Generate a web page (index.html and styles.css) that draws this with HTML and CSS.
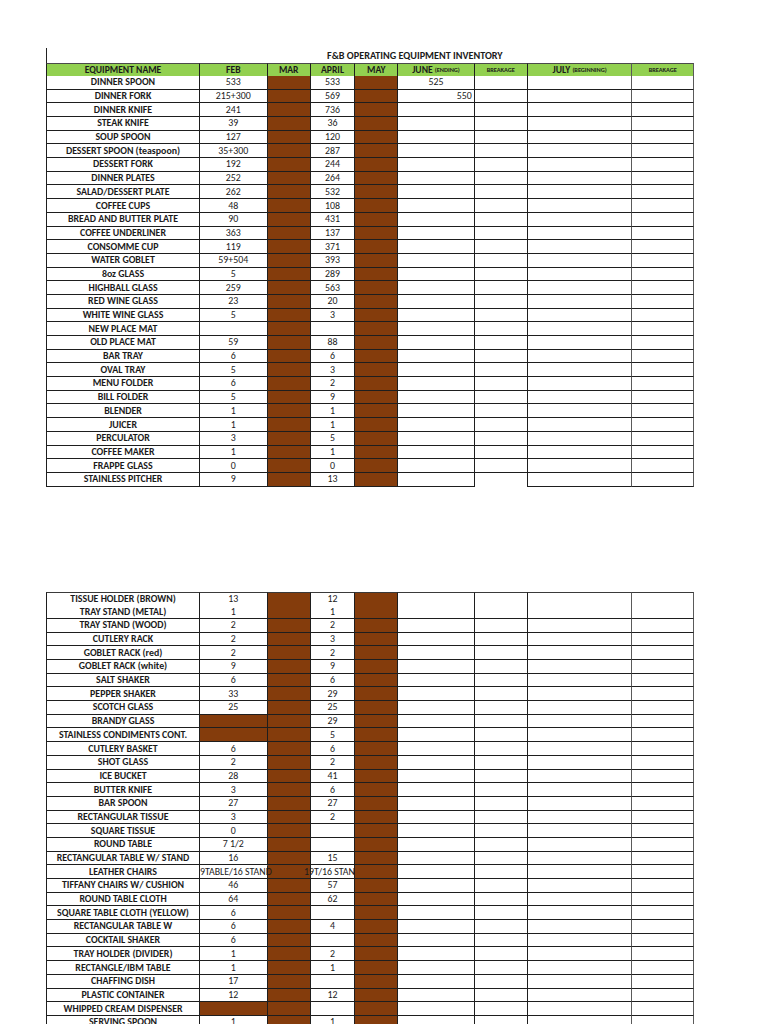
FILE: index.html
```html
<!DOCTYPE html>
<html>
<head>
<meta charset="utf-8">
<link rel="stylesheet" href="styles.css">
</head>
<body>
<div class="page">
  <div class="sheet t1">
    <div class="title-row"><span class="title">F&amp;B OPERATING EQUIPMENT INVENTORY</span></div>
    <div class="row head">
      <div class="c">EQUIPMENT NAME</div>
      <div class="c">FEB</div>
      <div class="c">MAR</div>
      <div class="c">APRIL</div>
      <div class="c">MAY</div>
      <div class="c">JUNE&nbsp;<small>(ENDING)</small></div>
      <div class="c"><small>BREAKAGE</small></div>
      <div class="c g">JULY&nbsp;<small>(BEGINNING)</small></div>
      <div class="c g"><small>BREAKAGE</small></div>
    </div>
    <div class="row"><div class="c n">DINNER SPOON</div><div class="c">533</div><div class="c b"></div><div class="c">533</div><div class="c b"></div><div class="c">525</div><div class="c"></div><div class="c g"></div><div class="c g"></div></div>
    <div class="row"><div class="c n">DINNER FORK</div><div class="c">215+300</div><div class="c b"></div><div class="c">569</div><div class="c b"></div><div class="c r">550</div><div class="c"></div><div class="c g"></div><div class="c g"></div></div>
    <div class="row"><div class="c n">DINNER KNIFE</div><div class="c">241</div><div class="c b"></div><div class="c">736</div><div class="c b"></div><div class="c"></div><div class="c"></div><div class="c g"></div><div class="c g"></div></div>
    <div class="row"><div class="c n">STEAK KNIFE</div><div class="c">39</div><div class="c b"></div><div class="c">36</div><div class="c b"></div><div class="c"></div><div class="c"></div><div class="c g"></div><div class="c g"></div></div>
    <div class="row"><div class="c n">SOUP SPOON</div><div class="c">127</div><div class="c b"></div><div class="c">120</div><div class="c b"></div><div class="c"></div><div class="c"></div><div class="c g"></div><div class="c g"></div></div>
    <div class="row"><div class="c n">DESSERT SPOON (teaspoon)</div><div class="c">35+300</div><div class="c b"></div><div class="c">287</div><div class="c b"></div><div class="c"></div><div class="c"></div><div class="c g"></div><div class="c g"></div></div>
    <div class="row"><div class="c n">DESSERT FORK</div><div class="c">192</div><div class="c b"></div><div class="c">244</div><div class="c b"></div><div class="c"></div><div class="c"></div><div class="c g"></div><div class="c g"></div></div>
    <div class="row"><div class="c n">DINNER PLATES</div><div class="c">252</div><div class="c b"></div><div class="c">264</div><div class="c b"></div><div class="c"></div><div class="c"></div><div class="c g"></div><div class="c g"></div></div>
    <div class="row"><div class="c n">SALAD/DESSERT PLATE</div><div class="c">262</div><div class="c b"></div><div class="c">532</div><div class="c b"></div><div class="c"></div><div class="c"></div><div class="c g"></div><div class="c g"></div></div>
    <div class="row"><div class="c n">COFFEE CUPS</div><div class="c">48</div><div class="c b"></div><div class="c">108</div><div class="c b"></div><div class="c"></div><div class="c"></div><div class="c g"></div><div class="c g"></div></div>
    <div class="row"><div class="c n">BREAD AND BUTTER PLATE</div><div class="c">90</div><div class="c b"></div><div class="c">431</div><div class="c b"></div><div class="c"></div><div class="c"></div><div class="c g"></div><div class="c g"></div></div>
    <div class="row"><div class="c n">COFFEE UNDERLINER</div><div class="c">363</div><div class="c b"></div><div class="c">137</div><div class="c b"></div><div class="c"></div><div class="c"></div><div class="c g"></div><div class="c g"></div></div>
    <div class="row"><div class="c n">CONSOMME CUP</div><div class="c">119</div><div class="c b"></div><div class="c">371</div><div class="c b"></div><div class="c"></div><div class="c"></div><div class="c g"></div><div class="c g"></div></div>
    <div class="row"><div class="c n">WATER GOBLET</div><div class="c">59+504</div><div class="c b"></div><div class="c">393</div><div class="c b"></div><div class="c"></div><div class="c"></div><div class="c g"></div><div class="c g"></div></div>
    <div class="row"><div class="c n">8oz GLASS</div><div class="c">5</div><div class="c b"></div><div class="c">289</div><div class="c b"></div><div class="c"></div><div class="c"></div><div class="c g"></div><div class="c g"></div></div>
    <div class="row"><div class="c n">HIGHBALL GLASS</div><div class="c">259</div><div class="c b"></div><div class="c">563</div><div class="c b"></div><div class="c"></div><div class="c"></div><div class="c g"></div><div class="c g"></div></div>
    <div class="row"><div class="c n">RED WINE GLASS</div><div class="c">23</div><div class="c b"></div><div class="c">20</div><div class="c b"></div><div class="c"></div><div class="c"></div><div class="c g"></div><div class="c g"></div></div>
    <div class="row"><div class="c n">WHITE WINE GLASS</div><div class="c">5</div><div class="c b"></div><div class="c">3</div><div class="c b"></div><div class="c"></div><div class="c"></div><div class="c g"></div><div class="c g"></div></div>
    <div class="row"><div class="c n">NEW PLACE MAT</div><div class="c"></div><div class="c b"></div><div class="c"></div><div class="c b"></div><div class="c"></div><div class="c"></div><div class="c g"></div><div class="c g"></div></div>
    <div class="row"><div class="c n">OLD PLACE MAT</div><div class="c">59</div><div class="c b"></div><div class="c">88</div><div class="c b"></div><div class="c"></div><div class="c"></div><div class="c g"></div><div class="c g"></div></div>
    <div class="row"><div class="c n">BAR TRAY</div><div class="c">6</div><div class="c b"></div><div class="c">6</div><div class="c b"></div><div class="c"></div><div class="c"></div><div class="c g"></div><div class="c g"></div></div>
    <div class="row"><div class="c n">OVAL TRAY</div><div class="c">5</div><div class="c b"></div><div class="c">3</div><div class="c b"></div><div class="c"></div><div class="c"></div><div class="c g"></div><div class="c g"></div></div>
    <div class="row"><div class="c n">MENU FOLDER</div><div class="c">6</div><div class="c b"></div><div class="c">2</div><div class="c b"></div><div class="c"></div><div class="c"></div><div class="c g"></div><div class="c g"></div></div>
    <div class="row"><div class="c n">BILL FOLDER</div><div class="c">5</div><div class="c b"></div><div class="c">9</div><div class="c b"></div><div class="c"></div><div class="c"></div><div class="c g"></div><div class="c g"></div></div>
    <div class="row"><div class="c n">BLENDER</div><div class="c">1</div><div class="c b"></div><div class="c">1</div><div class="c b"></div><div class="c"></div><div class="c"></div><div class="c g"></div><div class="c g"></div></div>
    <div class="row"><div class="c n">JUICER</div><div class="c">1</div><div class="c b"></div><div class="c">1</div><div class="c b"></div><div class="c"></div><div class="c"></div><div class="c g"></div><div class="c g"></div></div>
    <div class="row"><div class="c n">PERCULATOR</div><div class="c">3</div><div class="c b"></div><div class="c">5</div><div class="c b"></div><div class="c"></div><div class="c"></div><div class="c g"></div><div class="c g"></div></div>
    <div class="row"><div class="c n">COFFEE MAKER</div><div class="c">1</div><div class="c b"></div><div class="c">1</div><div class="c b"></div><div class="c"></div><div class="c"></div><div class="c g"></div><div class="c g"></div></div>
    <div class="row"><div class="c n">FRAPPE GLASS</div><div class="c">0</div><div class="c b"></div><div class="c">0</div><div class="c b"></div><div class="c"></div><div class="c"></div><div class="c g"></div><div class="c g"></div></div>
    <div class="row"><div class="c n">STAINLESS PITCHER</div><div class="c">9</div><div class="c b"></div><div class="c">13</div><div class="c b"></div><div class="c"></div><div class="c nb"></div><div class="c g"></div><div class="c g"></div></div>
  </div>

  <div class="sheet t2">
    <div class="row"><div class="c n">TISSUE HOLDER (BROWN)</div><div class="c">13</div><div class="c b"></div><div class="c">12</div><div class="c b"></div><div class="c"></div><div class="c"></div><div class="c g"></div><div class="c g"></div></div>
    <div class="row"><div class="c n">TRAY STAND (METAL)</div><div class="c">1</div><div class="c b"></div><div class="c">1</div><div class="c b"></div><div class="c"></div><div class="c"></div><div class="c g"></div><div class="c g"></div></div>
    <div class="row"><div class="c n">TRAY STAND (WOOD)</div><div class="c">2</div><div class="c b"></div><div class="c">2</div><div class="c b"></div><div class="c"></div><div class="c"></div><div class="c g"></div><div class="c g"></div></div>
    <div class="row"><div class="c n">CUTLERY RACK</div><div class="c">2</div><div class="c b"></div><div class="c">3</div><div class="c b"></div><div class="c"></div><div class="c"></div><div class="c g"></div><div class="c g"></div></div>
    <div class="row"><div class="c n">GOBLET RACK (red)</div><div class="c">2</div><div class="c b"></div><div class="c">2</div><div class="c b"></div><div class="c"></div><div class="c"></div><div class="c g"></div><div class="c g"></div></div>
    <div class="row"><div class="c n">GOBLET RACK (white)</div><div class="c">9</div><div class="c b"></div><div class="c">9</div><div class="c b"></div><div class="c"></div><div class="c"></div><div class="c g"></div><div class="c g"></div></div>
    <div class="row"><div class="c n">SALT SHAKER</div><div class="c">6</div><div class="c b"></div><div class="c">6</div><div class="c b"></div><div class="c"></div><div class="c"></div><div class="c g"></div><div class="c g"></div></div>
    <div class="row"><div class="c n">PEPPER SHAKER</div><div class="c">33</div><div class="c b"></div><div class="c">29</div><div class="c b"></div><div class="c"></div><div class="c"></div><div class="c g"></div><div class="c g"></div></div>
    <div class="row"><div class="c n">SCOTCH GLASS</div><div class="c">25</div><div class="c b"></div><div class="c">25</div><div class="c b"></div><div class="c"></div><div class="c"></div><div class="c g"></div><div class="c g"></div></div>
    <div class="row"><div class="c n">BRANDY GLASS</div><div class="c b"></div><div class="c b"></div><div class="c">29</div><div class="c b"></div><div class="c"></div><div class="c"></div><div class="c g"></div><div class="c g"></div></div>
    <div class="row"><div class="c n">STAINLESS CONDIMENTS CONT.</div><div class="c b"></div><div class="c b"></div><div class="c">5</div><div class="c b"></div><div class="c"></div><div class="c"></div><div class="c g"></div><div class="c g"></div></div>
    <div class="row"><div class="c n">CUTLERY BASKET</div><div class="c">6</div><div class="c b"></div><div class="c">6</div><div class="c b"></div><div class="c"></div><div class="c"></div><div class="c g"></div><div class="c g"></div></div>
    <div class="row"><div class="c n">SHOT GLASS</div><div class="c">2</div><div class="c b"></div><div class="c">2</div><div class="c b"></div><div class="c"></div><div class="c"></div><div class="c g"></div><div class="c g"></div></div>
    <div class="row"><div class="c n">ICE BUCKET</div><div class="c">28</div><div class="c b"></div><div class="c">41</div><div class="c b"></div><div class="c"></div><div class="c"></div><div class="c g"></div><div class="c g"></div></div>
    <div class="row"><div class="c n">BUTTER KNIFE</div><div class="c">3</div><div class="c b"></div><div class="c">6</div><div class="c b"></div><div class="c"></div><div class="c"></div><div class="c g"></div><div class="c g"></div></div>
    <div class="row"><div class="c n">BAR SPOON</div><div class="c">27</div><div class="c b"></div><div class="c">27</div><div class="c b"></div><div class="c"></div><div class="c"></div><div class="c g"></div><div class="c g"></div></div>
    <div class="row"><div class="c n">RECTANGULAR TISSUE</div><div class="c">3</div><div class="c b"></div><div class="c">2</div><div class="c b"></div><div class="c"></div><div class="c"></div><div class="c g"></div><div class="c g"></div></div>
    <div class="row"><div class="c n">SQUARE TISSUE</div><div class="c">0</div><div class="c b"></div><div class="c"></div><div class="c b"></div><div class="c"></div><div class="c"></div><div class="c g"></div><div class="c g"></div></div>
    <div class="row"><div class="c n">ROUND TABLE</div><div class="c">7 1/2</div><div class="c b"></div><div class="c"></div><div class="c b"></div><div class="c"></div><div class="c"></div><div class="c g"></div><div class="c g"></div></div>
    <div class="row"><div class="c n">RECTANGULAR TABLE W/ STAND</div><div class="c">16</div><div class="c b"></div><div class="c">15</div><div class="c b"></div><div class="c"></div><div class="c"></div><div class="c g"></div><div class="c g"></div></div>
    <div class="row"><div class="c n">LEATHER CHAIRS</div><div class="c ov clipl"><span>19TABLE/16 STAND</span></div><div class="c b"></div><div class="c ov"><span>19T/16 STAND</span></div><div class="c b"></div><div class="c"></div><div class="c"></div><div class="c g"></div><div class="c g"></div></div>
    <div class="row"><div class="c n">TIFFANY CHAIRS W/ CUSHION</div><div class="c">46</div><div class="c b"></div><div class="c">57</div><div class="c b"></div><div class="c"></div><div class="c"></div><div class="c g"></div><div class="c g"></div></div>
    <div class="row"><div class="c n">ROUND TABLE CLOTH</div><div class="c">64</div><div class="c b"></div><div class="c">62</div><div class="c b"></div><div class="c"></div><div class="c"></div><div class="c g"></div><div class="c g"></div></div>
    <div class="row"><div class="c n">SQUARE TABLE CLOTH (YELLOW)</div><div class="c">6</div><div class="c b"></div><div class="c"></div><div class="c b"></div><div class="c"></div><div class="c"></div><div class="c g"></div><div class="c g"></div></div>
    <div class="row"><div class="c n">RECTANGULAR TABLE W</div><div class="c">6</div><div class="c b"></div><div class="c">4</div><div class="c b"></div><div class="c"></div><div class="c"></div><div class="c g"></div><div class="c g"></div></div>
    <div class="row"><div class="c n">COCKTAIL SHAKER</div><div class="c">6</div><div class="c b"></div><div class="c"></div><div class="c b"></div><div class="c"></div><div class="c"></div><div class="c g"></div><div class="c g"></div></div>
    <div class="row"><div class="c n">TRAY HOLDER (DIVIDER)</div><div class="c">1</div><div class="c b"></div><div class="c">2</div><div class="c b"></div><div class="c"></div><div class="c"></div><div class="c g"></div><div class="c g"></div></div>
    <div class="row"><div class="c n">RECTANGLE/IBM TABLE</div><div class="c">1</div><div class="c b"></div><div class="c">1</div><div class="c b"></div><div class="c"></div><div class="c"></div><div class="c g"></div><div class="c g"></div></div>
    <div class="row"><div class="c n">CHAFFING DISH</div><div class="c">17</div><div class="c b"></div><div class="c"></div><div class="c b"></div><div class="c"></div><div class="c"></div><div class="c g"></div><div class="c g"></div></div>
    <div class="row"><div class="c n">PLASTIC CONTAINER</div><div class="c">12</div><div class="c b"></div><div class="c">12</div><div class="c b"></div><div class="c"></div><div class="c"></div><div class="c g"></div><div class="c g"></div></div>
    <div class="row"><div class="c n">WHIPPED CREAM DISPENSER</div><div class="c b"></div><div class="c b"></div><div class="c"></div><div class="c b"></div><div class="c"></div><div class="c"></div><div class="c g"></div><div class="c g"></div></div>
    <div class="row"><div class="c n">SERVING SPOON</div><div class="c">1</div><div class="c b"></div><div class="c">1</div><div class="c b"></div><div class="c"></div><div class="c"></div><div class="c g"></div><div class="c g"></div></div>
  </div>
</div>
</body>
</html>
```

FILE: styles.css
```css
html, body {
  margin: 0;
  background: #ffffff;
}

body {
  font-family: Carlito, Lato, "Liberation Sans", sans-serif;
  color: #1b1b1b;
  overflow: hidden;
}

.page {
  padding: 48px 0 0 46px;
}

.title-row {
  height: 14.7px;
  box-sizing: border-box;
  border-left: 1px solid #222;
  display: flex;
  align-items: center;
}

.title {
  margin-left: 280px;
  font-weight: 700;
  font-size: 10.2px;
}

.row {
  display: grid;
  grid-template-columns: 154px 67.7px 43px 44.6px 43px 76.4px 53.3px 104.3px 62px;
  height: 13.69px;
}

.c {
  box-sizing: border-box;
  border-right: 1px solid #1e1e1e;
  border-bottom: 1px solid #1e1e1e;
  display: flex;
  align-items: center;
  justify-content: center;
  font-size: 9.9px;
  white-space: nowrap;
  background: #ffffff;
  min-width: 0;
}

.c:first-child {
  border-left: 1px solid #1e1e1e;
}

.head {
  height: 13.3px;
}

.head .c {
  background: #92d050;
  font-weight: 700;
  font-size: 9.6px;
  border-top: 1px solid #4a4a4a;
}

.head small {
  font-size: 6.3px;
}

.n {
  font-weight: 700;
}

.b {
  background: #843c0c;
}

.r {
  justify-content: flex-end;
  padding-right: 2px;
}

.nb {
  border-bottom: none;
}

.g {
  border-right-color: #5a5a5a;
}

.t2 {
  margin-top: 105px;
}

.t2 .row:first-child .c {
  border-top: 1px solid #3a3a3a;
}

.ov {
  background: transparent;
}

.clipl {
  clip-path: inset(0 -60px 0 0);
}

.ov span {
  flex: none;
}
```
